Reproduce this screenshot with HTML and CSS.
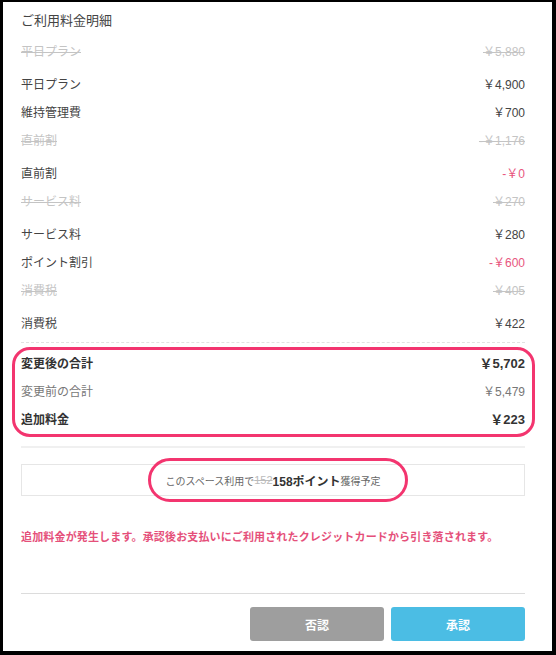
FILE: index.html
```html
<!DOCTYPE html>
<html lang="ja">
<head>
    <meta charset="UTF-8">
    <meta name="viewport" content="width=device-width, initial-scale=1.0">
    <title>ご利用料金明細</title>
    <link rel="stylesheet" href="styles.css">
</head>
<body>
    <div class="frame">
        <div class="content">
            <div class="title">ご利用料金明細</div>

            <div class="row old"><span>平日プラン</span><span>￥5,880</span></div>
            <div class="row"><span>平日プラン</span><span>￥4,900</span></div>
            <div class="row"><span>維持管理費</span><span>￥700</span></div>
            <div class="row old"><span>直前割</span><span>-￥1,176</span></div>
            <div class="row"><span>直前割</span><span class="minus">-￥0</span></div>
            <div class="row old"><span>サービス料</span><span>￥270</span></div>
            <div class="row"><span>サービス料</span><span>￥280</span></div>
            <div class="row"><span>ポイント割引</span><span class="minus">-￥600</span></div>
            <div class="row old"><span>消費税</span><span>￥405</span></div>
            <div class="row"><span>消費税</span><span>￥422</span></div>

            <div class="dashed"></div>

            <div class="totals mark">
                <div class="row strong"><span>変更後の合計</span><span class="amount">￥5,702</span></div>
                <div class="row light"><span>変更前の合計</span><span>￥5,479</span></div>
                <div class="row strong"><span>追加料金</span><span class="amount">￥223</span></div>
            </div>

            <div class="solid"></div>

            <div class="points">
                <span>このスペース利用で</span><s class="old-points">152</s><b>158ポイント</b><span>獲得予定</span>
            </div>

            <p class="notice">追加料金が発生します。承認後お支払いにご利用されたクレジットカードから引き落されます。</p>

            <div class="line"></div>

            <div class="actions">
                <button class="btn reject">否認</button>
                <button class="btn approve">承認</button>
            </div>
        </div>
    </div>
</body>
</html>
```

FILE: styles.css
```css
/* 料金明細モーダル */
body {
    margin: 0;
    padding: 0;
    background: #000;
    font-family: "Liberation Sans", "Noto Sans CJK JP", sans-serif;
    color: #444;
}
.frame {
    box-sizing: border-box;
    width: 556px;
    height: 655px;
    background: #fff;
    border-style: solid;
    border-color: #000;
    border-width: 2px 4px 4px 3px;
}
.content {
    padding: 4px 27px 0 18px;
}
.title {
    font-size: 13px;
    line-height: 30px;
    color: #444;
}
.row {
    display: flex;
    justify-content: space-between;
    align-items: center;
    height: 28px;
    font-size: 12px;
}
.row.old {
    color: #c4c4c4;
    text-decoration: line-through;
    margin-bottom: 5px;
}
.row .minus {
    color: #e8567e;
}
.dashed {
    margin-top: 6px;
    border-top: 1px dashed #e2e2e2;
}
.totals {
    margin-top: 5px;
}
.row.strong {
    font-weight: bold;
    color: #333;
}
.row.strong .amount {
    font-size: 13px;
}
.row.light {
    color: #777;
}
.mark {
    position: relative;
}
.mark::after {
    content: '';
    position: absolute;
    top: -1px;
    bottom: -5px;
    left: -9px;
    right: -10px;
    border: 3px solid #f3356f;
    border-radius: 18px;
}
.solid {
    margin-top: 14px;
    height: 2px;
    background: #f0f0f0;
}
.points {
    position: relative;
    box-sizing: border-box;
    margin-top: 16px;
    height: 32px;
    border: 1px solid #e6e6e6;
    display: flex;
    align-items: center;
    justify-content: center;
    font-size: 10px;
    color: #666;
}
.points .old-points {
    color: #bbb;
    font-size: 11px;
}
.points b {
    font-size: 12px;
    color: #333;
}
.points::after {
    content: '';
    position: absolute;
    top: -7px;
    bottom: -7px;
    left: 126px;
    right: 116px;
    border: 3px solid #f3356f;
    border-radius: 22px;
}
.notice {
    margin: 34px 0 0;
    font-size: 11px;
    line-height: 14px;
    font-weight: bold;
    letter-spacing: 0.16px;
    color: #e5507a;
    white-space: nowrap;
}
.line {
    margin-top: 49px;
    height: 1px;
    background: #dcdcdc;
}
.actions {
    margin-top: 13px;
    display: flex;
    justify-content: flex-end;
    gap: 7px;
}
.btn {
    width: 134px;
    height: 34px;
    border: none;
    border-radius: 3px;
    color: #fff;
    font-family: inherit;
    font-size: 12px;
    font-weight: bold;
    cursor: pointer;
}
.btn.reject {
    background: #9e9e9e;
}
.btn.approve {
    background: #4bbde4;
}
```
